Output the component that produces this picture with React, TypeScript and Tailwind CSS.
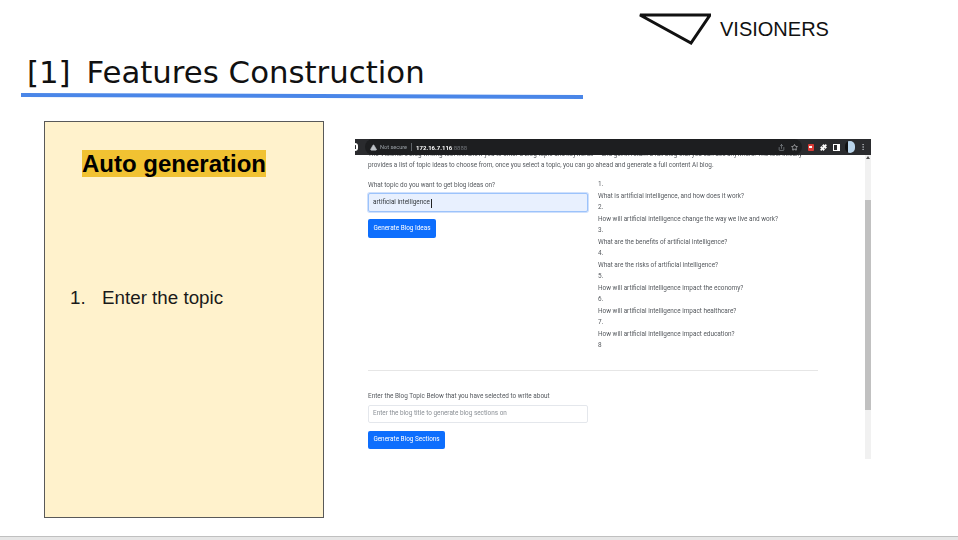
import { AlertTriangle, Star, Puzzle, MoreVertical, Share } from "lucide-react";

const ideas = [
  "1.",
  "What is artificial intelligence, and how does it work?",
  "2.",
  "How will artificial intelligence change the way we live and work?",
  "3.",
  "What are the benefits of artificial intelligence?",
  "4.",
  "What are the risks of artificial intelligence?",
  "5.",
  "How will artificial intelligence impact the economy?",
  "6.",
  "How will artificial intelligence impact healthcare?",
  "7.",
  "How will artificial intelligence impact education?",
  "8",
];

function BrowserBar() {
  return (
    <div className="flex h-4 shrink-0 items-center bg-[#2a2b2e] text-[#e8eaed] blur-[0.35px]">
      <div className="h-2 w-[3px] rounded-r-full border-2 border-l-0 border-white" />
      <div className="ml-[7px] flex h-full w-[437px] items-center rounded-full bg-[#1d1e20] pl-[5px]">
        <AlertTriangle className="h-[7px] w-[7px] fill-[#bdc1c6] text-[#bdc1c6]" />
        <span className="ml-[3px] font-['Roboto',sans-serif] text-[5.6px] text-[#9aa0a6]">Not secure</span>
        <span className="mx-[4px] h-2 w-px bg-[#5f6368]" />
        <span className="font-['Roboto',sans-serif] text-[6px] font-bold text-white">172.16.7.116</span>
        <span className="font-['Roboto',sans-serif] text-[6px] text-[#6f7378]">:8888</span>
        <div className="ml-auto flex items-center gap-[6px] pr-[4px]">
          <Share className="h-[7px] w-[7px] text-[#9aa0a6]" />
          <Star className="h-[7px] w-[7px] text-[#e8eaed]" />
        </div>
      </div>
      <div className="ml-auto flex items-center pr-[2px]">
        <span className="flex w-[13px] justify-center">
          <span className="flex h-[7px] w-[6px] items-center justify-center rounded-[1px] bg-[#d93a35]">
            <span className="h-[2px] w-[3px] bg-white" />
          </span>
        </span>
        <span className="flex w-[13px] justify-center">
          <Puzzle className="h-[7px] w-[7px] fill-white text-white" />
        </span>
        <span className="flex w-[13px] justify-center">
          <span className="h-[7px] w-[7px] border border-r-[3px] border-white" />
        </span>
        <span className="flex w-[13px] justify-center">
          <span className="h-[12px] w-[10px] rounded-full bg-[linear-gradient(90deg,#111_25%,#b9d4ea_25%)]" />
        </span>
        <span className="flex w-[13px] justify-center">
          <MoreVertical className="h-[8px] w-[8px] text-[#bdc1c6]" />
        </span>
      </div>
    </div>
  );
}

function BlogTool() {
  return (
    <div className="flex min-h-0 flex-1 bg-white">
      <div className="min-w-0 flex-1 overflow-hidden pl-[13px] font-['Roboto',sans-serif] text-[6.4px] leading-[11.5px] text-[#55595e] blur-[0.4px]">
        <p className="-mt-[6px] whitespace-nowrap leading-[11px]">
          The Visioner's blog writing tool will allow you to enter a blog topic and keywords — and get in return a full blog that you can use anywhere. The tool initially
        </p>
        <p className="whitespace-nowrap leading-[11px]">
          provides a list of topic ideas to choose from, once you select a topic, you can go ahead and generate a full content AI blog.
        </p>
        <div className="mt-[7px] flex">
          <div className="w-[220px]">
            <div className="mt-px h-[11px] pt-px">What topic do you want to get blog ideas on?</div>
            <div className="mt-[3px] flex h-[19px] items-center rounded-[2px] border border-[#9cc3fb] bg-[#e8f0fe] pl-[4px] pt-px text-[#33383d] shadow-[0_0_0_1px_#cfe0fc]">
              artificial intelligence<span className="ml-px h-[9px] w-px bg-[#222]" />
            </div>
            <button className="mt-[7px] h-[19px] w-[68px] rounded-[2px] bg-[#0d6efd] pt-px text-[6.4px] text-white">
              Generate Blog Ideas
            </button>
          </div>
          <ul className="ml-[10px] mt-px">
            {ideas.map((line) => (
              <li key={line} className="h-[11.5px] whitespace-nowrap">{line}</li>
            ))}
          </ul>
        </div>
        <hr className="mt-[18px] w-[450px] border-t border-[#e6e6e6]" />
        <div className="mt-[19px] h-[11px] pt-px leading-[11px]">Enter the Blog Topic Below that you have selected to write about</div>
        <div className="mt-[4px] flex h-[18px] w-[220px] items-center rounded-[2px] border border-[#e4e7ec] pl-[4px] pt-px text-[#8b9096]">
          Enter the blog title to generate blog sections on
        </div>
        <button className="mt-[8px] h-[18px] w-[77px] rounded-[2px] bg-[#0d6efd] pt-px text-[6.4px] text-white">
          Generate Blog Sections
        </button>
      </div>
      <div className="flex w-[6px] shrink-0 flex-col bg-[#f1f1f1]">
        <div className="mx-auto mt-[1px] h-0 w-0 border-x-2 border-b-[3px] border-x-transparent border-b-[#505050]" />
        <div className="mt-[41px] h-[210px] bg-[#c1c1c1]" />
      </div>
    </div>
  );
}

export default function App() {
  return (
    <div className="flex h-[540px] w-[958px] flex-col overflow-hidden bg-white font-['Liberation_Sans',sans-serif] text-black">
      <header className="h-[121px] shrink-0">
        <div className="flex h-[47px] items-end pl-[639px]">
          <svg width="72" height="32" viewBox="0 0 72 32" className="mb-[2px]" fill="none">
            <path d="M1 2 H71 L52 30 Z" stroke="#111" strokeWidth="3" strokeLinejoin="miter" />
          </svg>
          <span className="mb-[6px] ml-[9px] text-[20px] leading-6 text-[#111]">VISIONERS</span>
        </div>
        <h1 className="ml-[27px] mt-[2px] h-[45px] whitespace-nowrap font-['DejaVu_Sans',sans-serif] text-[30.8px] leading-[46px] text-[#111]">
          <span className="mr-[6px]">[1]</span> Features Construction
        </h1>
        <div className="ml-[21px] h-1 w-[562px] rotate-[0.2deg] bg-[#4a86e8]" />
      </header>

      <main className="flex min-h-0 flex-1 items-start pl-[44px]">
        <section className="h-[397px] w-[280px] shrink-0 border border-[#595959] bg-[#fff2cc]">
          <h2 className="ml-[37px] mt-[28px] w-fit bg-[#f1c232] text-[24px] font-bold leading-[27px]">
            Auto generation
          </h2>
          <div className="ml-[25px] mt-[109px] flex text-[18.8px] leading-[24px] text-[#1a1a1a]">
            <span className="w-[32px]">1.</span>
            <span>Enter the topic</span>
          </div>
        </section>
        <section className="ml-[31px] mt-[18px] flex h-[320px] w-[516px] shrink-0 flex-col overflow-hidden">
          <BrowserBar />
          <BlogTool />
        </section>
      </main>

      <footer className="h-1 shrink-0 border-t border-[#c0c0c0] bg-[#e6e6e6]" />
    </div>
  );
}
